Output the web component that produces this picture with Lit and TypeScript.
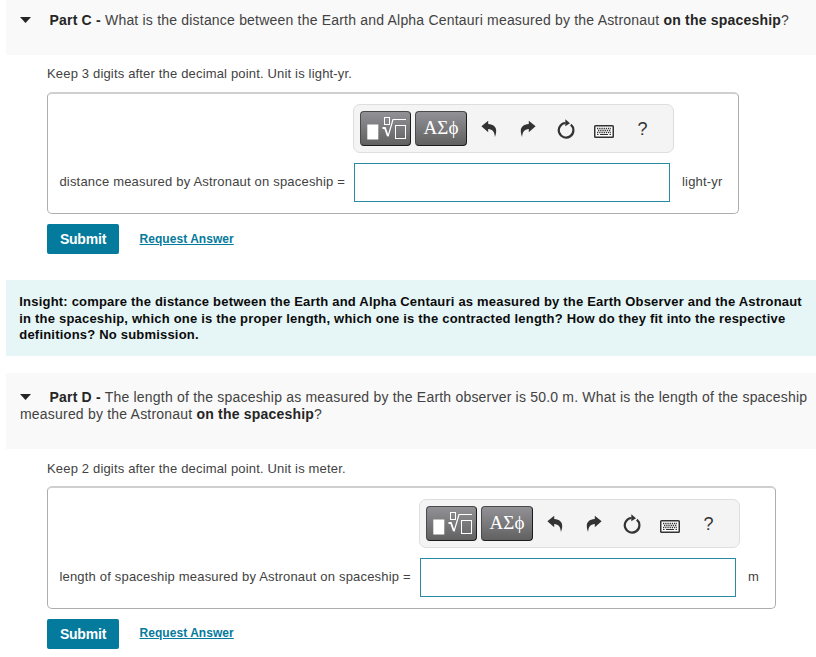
import { LitElement, html, css, svg } from "lit";
import { customElement, property } from "lit/decorators.js";

const arrow = svg`<path fill="#333" d="M1.4 7.3 8.2 1.8V5.1C13.6 5.4 16.4 8.2 16.2 12.2 16.1 14.6 15.5 16.4 14.9 17.9 14.6 13 12.6 10.1 8.2 9.9V13.2Z"/>`;

@customElement("math-toolbar")
class MathToolbar extends LitElement {
  static styles = css`
    :host {
      display: flex;
      align-items: center;
      box-sizing: border-box;
      width: 321px;
      height: 49px;
      padding-left: 6px;
      background: #f4f4f4;
      border: 1px solid #dedede;
      border-radius: 7px;
    }
    .key {
      box-sizing: border-box;
      flex: none;
      width: 51px;
      height: 35px;
      margin-right: 4px;
      border: 1px solid #1c1c1c;
      border-top-color: #4a4a4a;
      border-left-color: #4a4a4a;
      border-radius: 4px;
      background: linear-gradient(#929196, #616161);
      color: #fff;
      text-align: center;
    }
    .key svg { display: block; }
    .greek { width: 52px; font: 19px/32px "Liberation Serif", serif; margin-right: 0; }
    .icon { width: 20px; height: 20px; flex: none; }
    .undo { margin-left: 13px; }
    .redo { margin-left: 17px; transform: scaleX(-1); }
    .reset { margin-left: 19px; }
    .board { margin-left: 18px; }
    .help {
      width: 20px;
      margin-left: 18.500px;
      font: 18px/20px "Liberation Sans", Arial, sans-serif;
      color: #333;
      text-align: center;
    }
  `;

  render() {
    return html`
      <div class="key">
        <svg width="49" height="33" viewBox="1 1 49 33">
          <rect x="7.300" y="13.500" width="11" height="15" fill="#fff" />
          <g fill="none" stroke="#fff">
            <rect x="24.5" y="6.5" width="5" height="7" />
            <rect x="35.5" y="14.5" width="10" height="13" />
            <path d="M22.5 17h2.500l2.800 8" stroke-width="1.800" />
            <path d="M28 25.5 33 8.500H46" stroke-width="1.200" />
          </g>
        </svg>
      </div>
      <div class="key greek">ΑΣϕ</div>
      <svg class="icon undo" viewBox="0 0 20 20">${arrow}</svg>
      <svg class="icon redo" viewBox="0 0 20 20">${arrow}</svg>
      <svg class="icon reset" viewBox="0 0 20 20">
        <path d="M14.8 5.700A7.300 7.300 0 1 1 9.500 4" fill="none" stroke="#333" stroke-width="2.200" />
        <path d="M9.300 0.200 14 4.200 9.300 7.200Z" fill="#333" />
      </svg>
      <svg class="icon board" viewBox="0 0 20 20">
        <rect x="0.750" y="6.750" width="18.500" height="11.500" rx="0.800" fill="#fff" stroke="#333" stroke-width="1.500" />
        <path d="M3 9.500h14M4 11.500h13M3 13.500h14" stroke="#333" stroke-width="1.300" stroke-dasharray="1.300 0.900" />
        <path d="M3 15.500h1.500M6 15.500h8M15.500 15.500h1.500" stroke="#333" />
      </svg>
      <div class="help">?</div>
    `;
  }
}

@customElement("answer-form")
class AnswerForm extends LitElement {
  @property() label = "";
  @property() unit = "";
  @property() hint = "";

  static styles = css`
    :host { display: block; padding-left: 47px; }
    .hint { height: var(--hint-height, 26px); line-height: 16px; letter-spacing: 0.17px; }
    .box {
      box-sizing: border-box;
      display: grid;
      grid-template-columns: var(--label-width) 321px auto;
      grid-template-rows: 49px 39px;
      row-gap: 10px;
      width: var(--box-width);
      height: var(--box-height, 122px);
      padding: var(--box-top, 10px) 0 0 11px;
      border: 1px solid #adadad;
      border-top: 2px solid #cfcfcf;
      border-radius: 5px;
    }
    .tools { grid-column: 2; }
    .label { grid-column: 1; line-height: 38px; padding-left: 0.400px; white-space: nowrap; letter-spacing: 0.19px; }
    .field {
      box-sizing: border-box;
      width: 316px;
      height: 39px;
      margin-left: 1px;
      border: 1px solid #2a8ba5;
      background: #fff;
    }
    .unit { line-height: 38px; padding-left: 8px; letter-spacing: 0.19px; }
    .actions { display: flex; padding-top: 10px; }
    .submit {
      box-sizing: border-box;
      width: 72px;
      height: 30px;
      border-radius: 2px;
      background: #047a9c;
      color: #fff;
      font-weight: bold;
      font-size: 14px;
      line-height: 30px;
      text-align: center;
      letter-spacing: -0.200px;
    }
    .request {
      margin-left: 20.500px;
      font-weight: bold;
      font-size: 12px;
      line-height: var(--request-line, 30px);
      color: #047a9c;
      text-decoration: underline;
      letter-spacing: 0.050px;
    }
  `;

  render() {
    return html`
      <div class="hint">${this.hint}</div>
      <div class="box">
        <math-toolbar class="tools"></math-toolbar>
        <div class="label">${this.label}</div>
        <div class="field"></div>
        <div class="unit">${this.unit}</div>
      </div>
      <div class="actions">
        <div class="submit">Submit</div>
        <div class="request">Request Answer</div>
      </div>
    `;
  }
}

@customElement("app-root")
class AppRoot extends LitElement {
  static styles = css`
    :host {
      display: block;
      height: 657px;
      overflow: hidden;
      background: #fff;
      font: 13px "Liberation Sans", Arial, sans-serif;
      color: #424242;
    }
    .head {
      box-sizing: border-box;
      margin-left: 6px;
      padding-left: 14px;
      background: #f9f9f9;
      font-size: 14px;
      line-height: 17px;
      letter-spacing: 0.2px;
      white-space: nowrap;
    }
    .c { height: 55px; padding-top: 12px; }
    .d { height: 76px; padding-top: 16px; }
    b { color: #252525; }
    .tri { width: 11px; height: 6px; margin-right: 18.500px; vertical-align: 2px; }
    .form-c { padding-top: 11px; --label-width: 294px; --box-width: 692px; }
    .form-d {
      padding-top: 12px;
      --label-width: 360px;
      --box-width: 729px;
      --hint-height: 25px;
      --box-height: 123px;
      --box-top: 11px;
      --request-line: 28px;
    }
    .insight {
      box-sizing: border-box;
      height: 76px;
      margin: 26px 0 17px 6px;
      padding: 14px 0 0 13.300px;
      background: #e6f6f7;
      color: #0b0b0b;
      font-weight: bold;
      font-size: 13px;
      line-height: 16.500px;
      letter-spacing: 0.2px;
      white-space: nowrap;
    }
  `;

  private tri() {
    return html`<svg class="tri" viewBox="0 0 11 6"><path d="M0 0H11L5.500 6Z" fill="#252525" /></svg>`;
  }

  render() {
    return html`
      <div class="head c">${this.tri()}<b>Part C -</b> What is the distance between the Earth and Alpha Centauri measured by the Astronaut <b>on the spaceship</b>?</div>
      <answer-form class="form-c" hint="Keep 3 digits after the decimal point. Unit is light-yr." label="distance measured by Astronaut on spaceship =" unit="light-yr"></answer-form>
      <div class="insight">Insight: compare the distance between the Earth and Alpha Centauri as measured by the Earth Observer and the Astronaut<br />in the spaceship, which one is the proper length, which one is the contracted length? How do they fit into the respective<br />definitions? No submission.</div>
      <div class="head d">${this.tri()}<b>Part D -</b> The length of the spaceship as measured by the Earth observer is 50.0 m. What is the length of the spaceship<br />measured by the Astronaut <b>on the spaceship</b>?</div>
      <answer-form class="form-d" hint="Keep 2 digits after the decimal point. Unit is meter." label="length of spaceship measured by Astronaut on spaceship =" unit="m"></answer-form>
    `;
  }
}
